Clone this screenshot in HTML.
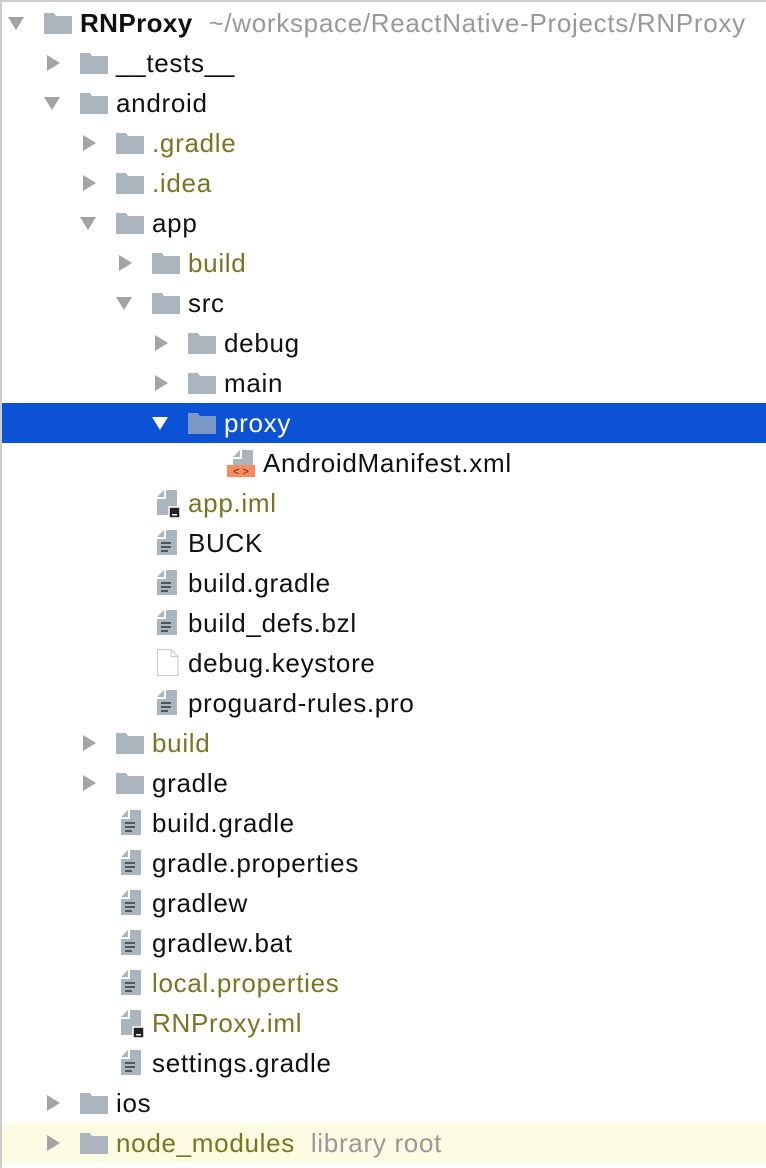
<!DOCTYPE html>
<html><head><meta charset="utf-8"><style>
html,body{margin:0;padding:0;background:#fff;}
body{width:766px;height:1168px;position:relative;overflow:hidden;font-family:"Liberation Sans",sans-serif;}
.top{position:absolute;left:0;top:0;width:766px;height:2px;background:#cdcdcd;}
.leftb{position:absolute;left:0;top:0;width:2px;height:1168px;background:#cdcdcd;}
.row{position:absolute;left:2px;width:764px;height:40px;}
.sel{background:#0c52d4;}
.lib{background:#fcfce2;}
.t{position:absolute;top:4px;font-size:26px;letter-spacing:0.7px;line-height:32px;color:#111;white-space:nowrap;}
.o{color:#767624;}
.g{color:#999;}
.w{color:#fff;}
.b{font-weight:bold;letter-spacing:0.4px;}
svg{position:absolute;}
</style></head><body>
<div class="top"></div><div class="leftb"></div>
<div id="tree"></div>
<script>
const rows=[
[0,'d','o','<span class="b">RNProxy</span>&nbsp;&nbsp;<span class="g">~/workspace/ReactNative-Projects/RNProxy</span>',''],
[1,'c','f','__tests__',''],
[1,'d','f','android',''],
[2,'c','f','.gradle','o'],
[2,'c','f','.idea','o'],
[2,'d','f','app',''],
[3,'c','f','build','o'],
[3,'d','f','src',''],
[4,'c','f','debug',''],
[4,'c','f','main',''],
[4,'d','f','proxy','sel'],
[5,'n','x','AndroidManifest.xml',''],
[3,'n','i','app.iml','o'],
[3,'n','t','BUCK',''],
[3,'n','t','build.gradle',''],
[3,'n','t','build_defs.bzl',''],
[3,'n','p','debug.keystore',''],
[3,'n','t','proguard-rules.pro',''],
[2,'c','f','build','o'],
[2,'c','f','gradle',''],
[2,'n','t','build.gradle',''],
[2,'n','t','gradle.properties',''],
[2,'n','t','gradlew',''],
[2,'n','t','gradlew.bat',''],
[2,'n','t','local.properties','o'],
[2,'n','i','RNProxy.iml','o'],
[2,'n','t','settings.gradle',''],
[1,'c','f','ios',''],
[1,'c','f','node_modules <span class="g">&nbsp;library root</span>','lib o']
];
let h='';
rows.forEach((r,i)=>{
 const [lv,ar,ic,txt,cls]=r;
 const top=3+40*i;
 const sel=cls.includes('sel');
 const lib=cls.includes('lib');
 const x0=lv*36;
 h+=`<div class="row${sel?' sel':''}${lib?' lib':''}" style="top:${top}px">`;
 const ac=sel?'#fff':'#a3a3a3';
 if(ar=='d') h+=`<svg style="left:${x0+6}px;top:12px" width="16" height="16"><polygon points="0,2 16,2 8,15" fill="${ac}"/></svg>`;
 if(ar=='c') h+=`<svg style="left:${x0+8}px;top:11px" width="14" height="18"><polygon points="1,1 14,9 1,17" fill="${ac}"/></svg>`;
 const ix=x0+42;
 const fc=sel?'#7b99c4':'#aab5bd';
 if(ic=='f'||ic=='o') h+=`<svg style="left:${ix}px;top:10px" width="28" height="21"><path d="M0 0H10L12 3H28V21H0Z" fill="${fc}"/></svg>`;
 if(ic=='t') h+=`<svg style="left:${ix+5}px;top:7px" width="20" height="25"><polygon points="0,7 7,0 7,7" fill="#aab5bd"/><polygon points="9,0 20,0 20,25 0,25 0,9 9,9" fill="#aab5bd"/><rect x="4" y="12" width="10" height="2" fill="#50585e"/><rect x="4" y="16" width="10" height="2" fill="#50585e"/><rect x="4" y="20" width="7" height="2" fill="#50585e"/></svg>`;
 if(ic=='i') h+=`<svg style="left:${ix+5}px;top:7px" width="24" height="29"><polygon points="0,7 7,0 7,7" fill="#aab5bd"/><polygon points="9,0 20,0 20,25 0,25 0,9 9,9" fill="#aab5bd"/><rect x="12" y="17" width="11" height="11" fill="#222" stroke="#fff" stroke-width="1.5"/><rect x="15" y="24" width="5" height="1.5" fill="#fff"/></svg>`;
 if(ic=='p') h+=`<svg style="left:${ix+5}px;top:6px" width="22" height="27"><path d="M0.5 0.5H14L21 7.5V26.5H0.5Z" fill="#fff" stroke="#c8c8c8"/><path d="M14 0.5V7.5H21" fill="none" stroke="#c8c8c8"/></svg>`;
 if(ic=='x') h+=`<svg style="left:${ix+3}px;top:7px" width="28" height="28"><polygon points="6,7 13,0 13,7" fill="#aab5bd"/><polygon points="15,0 26,0 26,15 6,15 6,9 15,9" fill="#aab5bd"/><rect x="0" y="15" width="28" height="12" fill="#f98b5c"/><text x="14" y="25" font-size="11" text-anchor="middle" fill="#5a2a14" font-family="Liberation Sans">&lt; &gt;</text></svg>`;
 let tx=x0+78; if(ic=='x') tx=ix+39;
 let tc=cls.includes('o')?' o':''; if(sel) tc=' w';
 h+=`<div class="t${tc}" style="left:${tx}px">${txt}</div></div>`;
});
document.getElementById('tree').innerHTML=h;
</script>
</body></html>
